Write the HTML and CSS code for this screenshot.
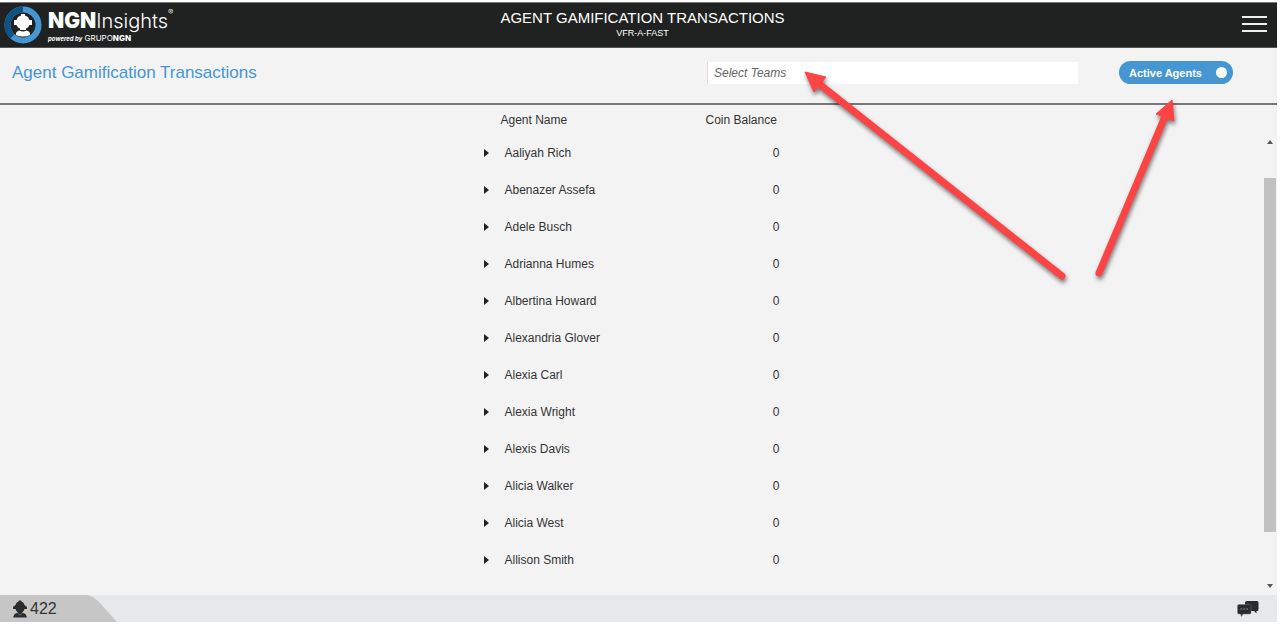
FILE: index.html
```html
<!DOCTYPE html>
<html lang="en">
<head>
  <meta charset="UTF-8">
  <meta name="viewport" content="width=device-width, initial-scale=1.0">
  <title>Agent Gamification Transactions</title>
  <link rel="stylesheet" href="styles.css">
</head>
<body>
<div class="app">
  <header class="topbar">
    <a class="logo" href="#">
      <svg class="logo-mark" viewBox="0 0 38 38" aria-hidden="true">
        <circle cx="19" cy="19" r="15.5" fill="none" stroke="#4596d3" stroke-width="6"/>
        <path d="M8.500 30.400A15.500 15.500 0 0 1 19 3.500" fill="none" stroke="#0d5283" stroke-width="6"/>
        <path d="M17 8h4v1.500l3 1.500 1.500 3H28v5h-2.500L24 21.500l-2 1V24h-6v-1.500l-2-1-1.500-2.500H10v-5h2.500L14 11l3-1.500z" fill="#fff"/>
        <path d="M12 27q.5-2 3.500-2.500 3.500 2 7 0Q25.500 25 26 27v2q-3 1.500-7 1.500T12 29z" fill="#fff"/>
      </svg>
      <span class="logo-text">
        <span class="logo-name"><b>NGN</b>Insights<sup>®</sup></span>
        <span class="logo-sub"><i>powered by</i> GRUPO<b>NGN</b></span>
      </span>
    </a>
    <div class="heading">
      <h1>AGENT GAMIFICATION TRANSACTIONS</h1>
      <p>VFR-A-FAST</p>
    </div>
    <button class="menu" type="button" aria-label="Menu"><span></span><span></span><span></span></button>
  </header>

  <section class="toolbar">
    <h2>Agent Gamification Transactions</h2>
    <input class="teams" type="text" placeholder="Select Teams" aria-label="Select Teams">
    <label class="toggle" for="active">Active Agents <input type="checkbox" id="active" checked></label>
  </section>

  <main class="content">
    <table class="agents">
      <thead>
        <tr><th class="expand"></th><th class="name">Agent Name</th><th class="coins">Coin Balance</th></tr>
      </thead>
      <tbody>
        <tr><td><button type="button" aria-label="Expand"></button></td><td>Aaliyah Rich</td><td>0</td></tr>
        <tr><td><button type="button" aria-label="Expand"></button></td><td>Abenazer Assefa</td><td>0</td></tr>
        <tr><td><button type="button" aria-label="Expand"></button></td><td>Adele Busch</td><td>0</td></tr>
        <tr><td><button type="button" aria-label="Expand"></button></td><td>Adrianna Humes</td><td>0</td></tr>
        <tr><td><button type="button" aria-label="Expand"></button></td><td>Albertina Howard</td><td>0</td></tr>
        <tr><td><button type="button" aria-label="Expand"></button></td><td>Alexandria Glover</td><td>0</td></tr>
        <tr><td><button type="button" aria-label="Expand"></button></td><td>Alexia Carl</td><td>0</td></tr>
        <tr><td><button type="button" aria-label="Expand"></button></td><td>Alexia Wright</td><td>0</td></tr>
        <tr><td><button type="button" aria-label="Expand"></button></td><td>Alexis Davis</td><td>0</td></tr>
        <tr><td><button type="button" aria-label="Expand"></button></td><td>Alicia Walker</td><td>0</td></tr>
        <tr><td><button type="button" aria-label="Expand"></button></td><td>Alicia West</td><td>0</td></tr>
        <tr><td><button type="button" aria-label="Expand"></button></td><td>Allison Smith</td><td>0</td></tr>
      </tbody>
    </table>
    <div class="scrollbar" aria-hidden="true">
      <span class="up"></span>
      <div class="track"><div class="thumb"></div></div>
      <span class="down"></span>
    </div>
  </main>

  <footer class="footer">
    <div class="count">
      <svg width="16" height="18" viewBox="0 0 16 18" aria-hidden="true">
        <path d="M7 .5h2l.5 1Q12 2 12.500 5L15 7v2h-2.500q-.5 2.500-2.500 3.500l3.500 1.500 1.500 3.500H1L2.500 14 6 12.500Q4 11.500 3.500 9H1V7l2.500-2Q4 2 6.500 1.500z" fill="#2b2d2d"/>
        <path d="M5.500 13.500 8 15l2.500-1.500" fill="none" stroke="#777" stroke-width=".8"/>
      </svg>
      <span>422</span>
    </div>
    <button class="chat" type="button" aria-label="Chat">
      <svg width="22" height="17" viewBox="0 0 22 17" aria-hidden="true">
        <path d="M10 1h10q1.500 0 1.500 1.500v7Q21.500 11 20 11h-.5v2.500L17 11H10q-2 0-2-1.500v-7Q8 1 10 1z" fill="#2b2d2d"/>
        <path d="M2 4.500h10.500q1.500 0 1.500 1.500v6.500q0 1.500-1.500 1.500H6l-1.500 2.500L3.500 14H2Q.5 14 .5 12.500V6Q.5 4.500 2 4.500z" fill="#2b2d2d" stroke="#777" stroke-width=".5"/>
        <path d="M3.500 9h1.600M6.500 9h1.600M9.500 9h1.600" stroke="#777" stroke-width="1.500"/>
      </svg>
    </button>
  </footer>

  <!-- callout arrows -->
  <svg class="arrows" width="1280" height="626" viewBox="0 0 1280 626" aria-hidden="true">
    <g fill="#fd4444" stroke="#fd4444">
      <path d="M818 83 1062 276" stroke-width="7" stroke-linecap="round"/>
      <path d="M805 72 826 77 814 92z" stroke-width="1"/>
      <path d="M1166 114 1099 273" stroke-width="7" stroke-linecap="round"/>
      <path d="M1172 100 1156 114 1174 121z" stroke-width="1"/>
    </g>
  </svg>
</div>
</body>
</html>
```
FILE: styles.css
```css
* {
  box-sizing: border-box;
}

body {
  margin: 0;
  background: #fff;
  color: #333;
  font-family: "Liberation Sans", Arial, sans-serif;
  font-size: 12px;
}

h1, h2, p {
  margin: 0;
  font-weight: normal;
}

button {
  padding: 0;
  border: none;
  background: none;
  cursor: pointer;
}

.app {
  position: relative;
  display: flex;
  flex-direction: column;
  min-height: 100vh;
  padding: 2px 3px 4px 0;
}

/* top bar */
.topbar {
  display: grid;
  grid-template-columns: 1fr auto 1fr;
  align-items: center;
  height: 46px;
  padding: 0 10px 0 4px;
  background: #202221;
  border-top: 1px solid #777;
  border-bottom: 1px solid #555;
  color: #fff;
}

.logo {
  display: flex;
  align-items: center;
  gap: 6px;
  color: #fff;
  text-decoration: none;
}

.logo-mark {
  width: 38px;
  height: 38px;
}

.logo-text {
  display: flex;
  flex-direction: column;
  font-family: Inter, sans-serif;
}

.logo-name {
  font-size: 20px;
  font-weight: 300;
  line-height: 26px;
}

.logo-name b {
  font-size: 21px;
  font-weight: 900;
}

.logo-name sup {
  font-size: 8px;
  line-height: 8px;
  vertical-align: top;
}

.logo-sub {
  font-size: 8px;
  line-height: 8px;
}

.logo-sub i {
  font-size: 6px;
  font-weight: bold;
}

.logo-sub b {
  font-weight: 800;
}

.heading {
  padding-left: 14px;
  text-align: center;
}

.heading h1 {
  font-size: 15px;
  line-height: 18px;
}

.heading p {
  font-size: 9px;
  line-height: 12px;
}

.heading,
.menu {
  margin-bottom: 2px;
}

.menu {
  display: flex;
  flex-direction: column;
  gap: 5px;
  width: 25px;
  justify-self: end;
}

.menu span {
  height: 2px;
  background: #eee;
}

/* title and filters */
.toolbar {
  display: grid;
  grid-template-columns: 707fr 371fr 199fr;
  align-items: center;
  height: 57px;
  padding-bottom: 6px;
  background: #f3f3f3;
  border-bottom: 2px solid #777;
}

.toolbar h2 {
  padding-left: 12px;
  color: #4596d3;
  font-size: 17px;
}

.teams {
  width: 100%;
  height: 22px;
  padding: 0 6px;
  border: none;
  border-left: 1px solid #ddd;
  background: #fff;
  font: italic 12px "Liberation Sans", Arial, sans-serif;
}

.teams::placeholder {
  color: #666;
}

.toggle {
  display: flex;
  align-items: center;
  justify-content: space-between;
  width: 114px;
  height: 23px;
  margin-left: 41px;
  padding: 0 6px 0 10px;
  border-radius: 12px;
  background: #4596d3;
  color: #fff;
  font-size: 11px;
  font-weight: bold;
}

.toggle input {
  appearance: none;
  width: 11px;
  height: 11px;
  margin: 0;
  border-radius: 50%;
  background: #fff;
}

/* agent list */
.content {
  display: flex;
  flex: 1;
  align-items: stretch;
  padding-left: 14px;
  background: #f3f3f3;
}

.agents {
  align-self: flex-start;
  width: 324px;
  margin: 0 auto;
  border-collapse: collapse;
  table-layout: fixed;
}

.agents th {
  height: 29px;
  padding: 0;
  font-weight: normal;
  text-align: left;
}

.agents .expand {
  width: 24px;
}

.agents .name {
  width: 205px;
}

.agents td {
  height: 37px;
  padding: 0 0 0 4px;
}

.agents td:last-child {
  padding-right: 21px;
  text-align: right;
}

.agents button {
  display: block;
  margin-left: 3px;
  border-left: 5px solid #222;
  border-top: 4px solid transparent;
  border-bottom: 4px solid transparent;
}

.scrollbar {
  display: flex;
  flex-direction: column;
  align-items: center;
  width: 14px;
  padding: 35px 0 7px;
}

.scrollbar .up,
.scrollbar .down {
  border-left: 3px solid transparent;
  border-right: 3px solid transparent;
}

.scrollbar .up {
  border-bottom: 4px solid #555;
}

.scrollbar .down {
  border-top: 4px solid #555;
}

.track {
  flex: 1;
  width: 12px;
  padding: 34px 0 52px;
}

.thumb {
  height: 100%;
  background: #c1c1c1;
}

/* bottom bar */
.footer {
  display: flex;
  align-items: center;
  justify-content: space-between;
  height: 27px;
  padding-right: 18px;
  background: #e6e8ea;
}

.count {
  display: flex;
  align-items: center;
  gap: 2px;
  width: 117px;
  height: 27px;
  padding-left: 12px;
  background: #c6c6c6;
  clip-path: polygon(0 0, 88px 0, 93px 2px, 98px 6px, 117px 27px, 0 27px);
  font-size: 16px;
}

.chat svg {
  display: block;
}

.arrows {
  position: absolute;
  top: 0;
  left: 0;
  pointer-events: none;
  filter: drop-shadow(1px 3px 2px rgba(0, 0, 0, 0.5));
}
```
